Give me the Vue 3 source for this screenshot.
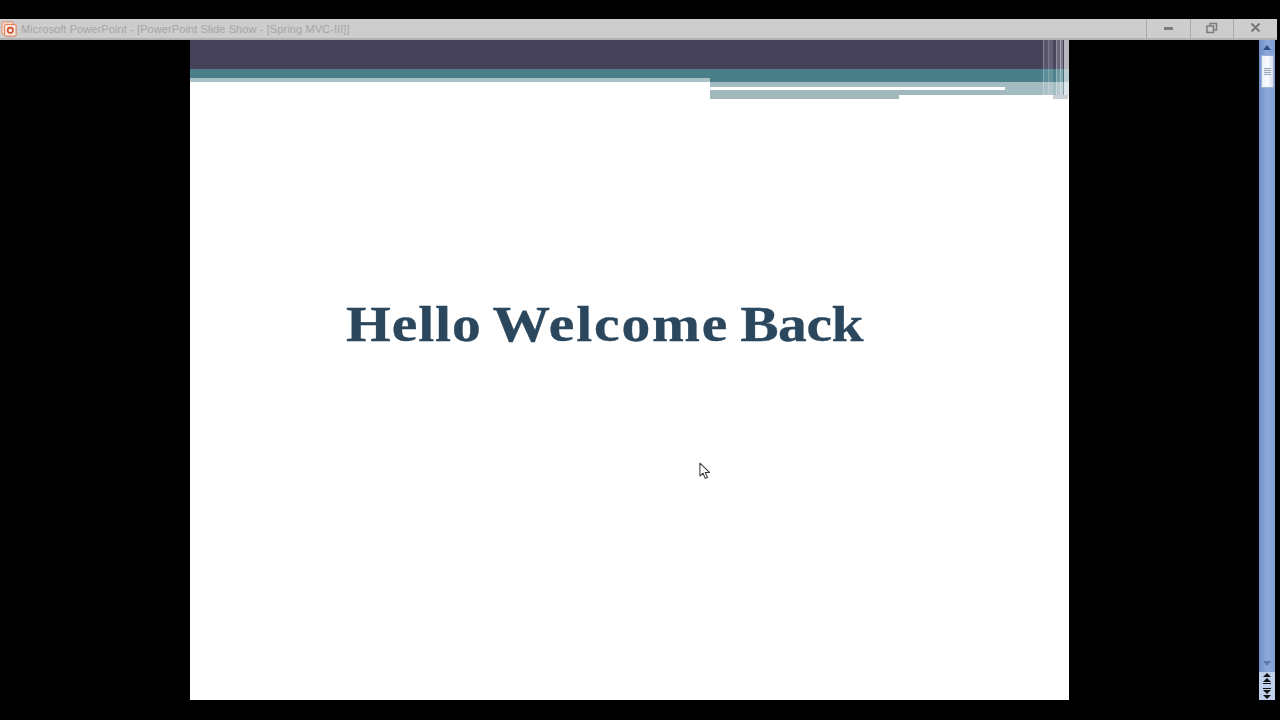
<script setup>
const stripes = [
  { w: 1, c: 'rgba(255,255,255,.32)' },
  { w: 4, c: 'rgba(255,255,255,.1)' },
  { w: 1, c: 'rgba(255,255,255,.3)' },
  { w: 4, c: 'rgba(255,255,255,.16)' },
  { w: 3, c: 'rgba(255,255,255,.02)' },
  { w: 1, c: 'rgba(255,255,255,.42)' },
  { w: 3, c: 'rgba(255,255,255,.2)' },
  { w: 1, c: 'rgba(255,255,255,.5)' },
  { w: 2, c: 'rgba(255,255,255,.3)' },
  { w: 1, c: 'rgba(70,70,90,.25)' },
  { w: 5, c: 'rgba(255,255,255,.62)' }
]
</script>

<template>
  <div class="screen">
    <header class="titlebar">
      <svg class="app-icon" viewBox="0 0 18 18">
        <rect x="1" y="1" width="13" height="14" rx="1.5" fill="#f7d5c6" stroke="#e58a68" />
        <rect x="4" y="4" width="13" height="13" rx="1.5" fill="#f9e6dc" stroke="#dc6b48" />
        <circle cx="10.5" cy="10.5" r="3" fill="none" stroke="#cf4f2c" stroke-width="1.8" />
      </svg>
      <span class="title">Microsoft PowerPoint - [PowerPoint Slide Show - [Spring MVC-III]]</span>
      <div class="controls">
        <div class="ctl ctl-min"><span class="min-glyph"></span></div>
        <div class="ctl ctl-max">
          <svg width="12" height="12" viewBox="0 0 12 12" fill="none" stroke="#7d7d7d" stroke-width="1.5">
            <rect x="1" y="4" width="6.5" height="6.5" />
            <path d="M4 3.5V1.5h6.5V8H8" />
          </svg>
        </div>
        <div class="ctl ctl-close">
          <svg width="11" height="11" viewBox="0 0 11 11" stroke="#777" stroke-width="2">
            <path d="M1.5 1.5l8 8M9.5 1.5l-8 8" />
          </svg>
        </div>
      </div>
    </header>

    <main class="stage">
      <section class="slide">
        <div class="deco">
          <div class="band-dark"></div>
          <div class="bands">
            <div class="bands-left">
              <div class="teal-short"></div>
              <div class="light-short"></div>
            </div>
            <div class="bands-right">
              <div class="teal-tall"></div>
              <div class="light-row"></div>
              <div class="line-row">
                <div class="white-line"></div>
                <div class="line-rest"></div>
              </div>
              <div class="low-row">
                <div class="low-a"></div>
                <div class="low-c"></div>
              </div>
              <div class="tail-row">
                <div class="tail"></div>
                <div class="tail-end"></div>
              </div>
            </div>
          </div>
          <div class="stripes">
            <i v-for="(s, n) in stripes" :key="n" :style="{ width: s.w + 'px', background: s.c }"></i>
          </div>
        </div>
        <h1 class="heading"><span class="w1">Hello</span> <span class="w2">Welcome</span> <span class="w3">Back</span></h1>
      </section>

      <svg class="cursor" width="11" height="18" viewBox="0 0 12 19">
        <path d="M1 1v14l3.4-3.1 2.4 5.6 2.4-1-2.4-5.4h4.6z" fill="#fff" stroke="#333" stroke-width="1.1" stroke-linejoin="round" />
      </svg>

      <aside class="scrollbar">
        <div class="arrow-up"></div>
        <div class="thumb"><span class="grip"></span></div>
        <div class="track"></div>
        <div class="arrow-down"></div>
        <div class="nav">
          <svg width="10" height="11" viewBox="0 0 10 11" fill="#111"><path d="M5 0l4 4H1zM5 5l4 4H1zM1 10h8v1H1z" /></svg>
          <svg width="10" height="11" viewBox="0 0 10 11" fill="#111"><path d="M1 0h8v1H1zM1 2h8l-4 4zM1 7h8l-4 4z" /></svg>
        </div>
      </aside>
    </main>
  </div>
</template>

<style scoped>
.screen {
  width: 1280px;
  height: 720px;
  background: #000;
  display: flex;
  flex-direction: column;
  padding: 19px 0 20px;
  box-sizing: border-box;
  overflow: hidden;
}
.titlebar {
  height: 21px;
  width: 1277px;
  flex: none;
  display: flex;
  align-items: center;
  background: #cdcdcd;
  border-bottom: 2px solid #b2b2b2;
  box-sizing: border-box;
  padding-left: 1px;
}
.app-icon {
  width: 16px;
  height: 16px;
  flex: none;
}
.title {
  margin-left: 4px;
  font: 11px "Liberation Sans", Arial, sans-serif;
  color: #a5a5a5;
  white-space: nowrap;
  letter-spacing: 0.1px;
}
.controls {
  margin-left: auto;
  display: flex;
  height: 100%;
}
.ctl {
  display: flex;
  align-items: center;
  justify-content: center;
  border-left: 1px solid #a8a8a8;
  box-sizing: border-box;
  padding-bottom: 2px;
}
.ctl-min { width: 44px; }
.ctl-max { width: 43px; }
.ctl-close { width: 44px; }
.min-glyph {
  width: 9px;
  height: 3px;
  margin-top: 2px;
  background: #7d7d7d;
}
.stage {
  flex: 1;
  position: relative;
  display: flex;
  padding-left: 190px;
  min-height: 0;
}
.slide {
  width: 879px;
  background: #fff;
  display: flex;
  flex-direction: column;
}
.deco {
  position: relative;
  flex: none;
}
.band-dark {
  height: 29px;
  background: #45425a;
}
.bands {
  display: flex;
  align-items: flex-start;
}
.bands-left {
  width: 520px;
  flex: none;
}
.teal-short {
  height: 9px;
  background: #4a7f89;
}
.light-short {
  height: 4px;
  background: #a8c2c6;
}
.bands-right {
  flex: 1;
}
.teal-tall {
  height: 13px;
  background: #4a7f89;
}
.light-row {
  height: 5px;
  background: #a3bcc2;
}
.line-row {
  display: flex;
  height: 3px;
}
.white-line {
  width: 295px;
  background: #fff;
}
.line-rest {
  flex: 1;
  background: #a3bcc2;
}
.low-row {
  display: flex;
  height: 5px;
}
.low-a {
  width: 295px;
  background: #a1b8bc;
}
.low-c {
  flex: 1;
  background: #a3bcc2;
}
.tail-row {
  display: flex;
  justify-content: space-between;
  height: 4px;
}
.tail {
  width: 189px;
  background: #a1b8bc;
}
.tail-end {
  width: 15px;
  margin-right: 1px;
  background: #c9ced2;
}
.stripes {
  position: absolute;
  top: 0;
  right: 0;
  bottom: 4px;
  display: flex;
}
.stripes i {
  display: block;
  height: 100%;
}
.heading {
  margin: 195px 0 0 156px;
  font: bold 50px/60px "Liberation Serif", "Times New Roman", serif;
  color: #2a475e;
  white-space: nowrap;
  word-spacing: -3px;
  -webkit-text-stroke: 0.3px #2a475e;
  transform: scaleX(1.151);
  transform-origin: left center;
}
.w1 { letter-spacing: 0.8px; }
.w2 { letter-spacing: 1.6px; }
.w3 { letter-spacing: -0.4px; }
.cursor {
  position: absolute;
  left: 699px;
  top: 422px;
}
.scrollbar {
  position: absolute;
  left: 1259px;
  top: 0;
  bottom: 0;
  width: 16px;
  display: flex;
  flex-direction: column;
  align-items: center;
  background: linear-gradient(90deg, #6f8fc9, #8fa9d9 50%, #7f9ed4);
}
.arrow-up {
  flex: none;
  margin-top: 5px;
  width: 0;
  height: 0;
  border: 4px solid transparent;
  border-top: 0;
  border-bottom: 5px solid #2f4f86;
}
.thumb {
  flex: none;
  width: 13px;
  height: 33px;
  margin-top: 5px;
  box-sizing: border-box;
  background: linear-gradient(90deg, #e9eef7, #fbfcff 50%, #d4deef);
  border: 1px solid #9fb2d3;
  display: flex;
  align-items: center;
  justify-content: center;
}
.grip {
  width: 7px;
  height: 7px;
  background: repeating-linear-gradient(#9da7b6 0 1px, #e8ecf3 1px 2px);
}
.track {
  flex: 1;
}
.arrow-down {
  flex: none;
  width: 0;
  height: 0;
  margin-bottom: 6px;
  border: 4px solid transparent;
  border-bottom: 0;
  border-top: 5px solid #5a79ad;
}
.nav {
  flex: none;
  width: 16px;
  height: 28px;
  background: #bed0ea;
  display: flex;
  flex-direction: column;
  align-items: center;
  justify-content: center;
  gap: 4px;
}
</style>

<style>
html, body {
  margin: 0;
  background: #000;
}
</style>
